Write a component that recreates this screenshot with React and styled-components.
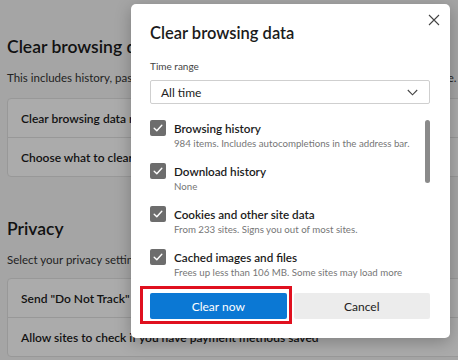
import React from "react";
import styled, { createGlobalStyle } from "styled-components";

const GlobalStyle = createGlobalStyle`
  html, body {
    margin: 0;
    padding: 0;
  }
  body {
    font-family: Lato, "Open Sans", sans-serif;
    color: #1b1b1b;
  }
`;

const Page = styled.div`
  position: relative;
  width: 458px;
  height: 360px;
  overflow: hidden;
  background: #f7f7f7;
  padding: 0 7px;
  box-sizing: border-box;
`;

const Section = styled.section`
  padding-top: ${(p) => p.top}px;
`;

const Heading = styled.h2`
  margin: 0;
  font-size: 17.5px;
  font-weight: 600;
  line-height: 22px;
  white-space: nowrap;
`;

const Lead = styled.p`
  margin: 13px 0 0;
  font-size: 11.5px;
  line-height: 14px;
  color: #333;
  white-space: nowrap;
`;

const Card = styled.div`
  margin-top: ${(p) => p.gap}px;
  width: 560px;
  background: #fff;
  border: 1px solid #e3e3e3;
  border-radius: 4px;
`;

const CardRow = styled.div`
  height: 38px;
  display: flex;
  align-items: center;
  padding-left: 13px;
  font-size: 12px;
  font-weight: 600;
  white-space: nowrap;
  & + & {
    border-top: 1px solid #e3e3e3;
  }
`;

const Overlay = styled.div`
  position: absolute;
  inset: 0;
  background: rgba(0, 0, 0, 0.33);
  padding: 4px 0 0 131px;
`;

const Dialog = styled.div`
  position: relative;
  width: 319px;
  height: 334px;
  box-sizing: border-box;
  background: #fff;
  border-radius: 5px;
  box-shadow: 0 4px 16px rgba(0, 0, 0, 0.25);
  padding: 17px 20px 0 19px;
  display: flex;
  flex-direction: column;
`;

const CloseButton = styled.button`
  position: absolute;
  top: 5px;
  right: 5px;
  width: 22px;
  height: 22px;
  padding: 0;
  border: none;
  background: none;
  display: flex;
  align-items: center;
  justify-content: center;
`;

const Title = styled.h1`
  margin: 0;
  font-size: 16.5px;
  font-weight: 600;
  line-height: 24px;
`;

const Label = styled.div`
  margin-top: 15px;
  font-size: 10px;
  line-height: 12px;
  color: #444;
`;

const Select = styled.div`
  margin-top: 8px;
  height: 24px;
  box-sizing: border-box;
  border: 1px solid #cfcfcf;
  border-radius: 2px;
  display: flex;
  align-items: center;
  justify-content: space-between;
  padding: 0 11px 0 10px;
  font-size: 12px;
  color: #222;
`;

const ListArea = styled.div`
  position: relative;
  margin-top: 16px;
  height: 160px;
  overflow: hidden;
`;

const Scrollbar = styled.div`
  position: absolute;
  right: 0;
  top: 0;
  width: 5px;
  height: 63px;
  border-radius: 3px;
  background: #8a8a8a;
`;

const Item = styled.div`
  display: flex;
  gap: 8px;
  height: 43px;
`;

const Box = styled.span`
  flex: none;
  width: 16px;
  height: 16px;
  border-radius: 2px;
  background: #6d6d6d;
  display: flex;
  align-items: center;
  justify-content: center;
`;

const ItemText = styled.div`
  display: flex;
  flex-direction: column;
  margin-top: 1px;
  max-width: 244px;
`;

const ItemTitle = styled.span`
  font-size: 11.7px;
  font-weight: 600;
  line-height: 15px;
  color: #1b1b1b;
`;

const ItemDesc = styled.span`
  font-size: 9.7px;
  line-height: 14px;
  color: #767676;
`;

const Actions = styled.div`
  margin-top: 13px;
  display: flex;
  gap: 7px;
  width: 280px;
`;

const ButtonWrap = styled.div`
  position: relative;
  flex: 1;
  display: flex;
`;

const Highlight = styled.span`
  position: absolute;
  left: -10px;
  right: -5px;
  top: -7px;
  bottom: -5px;
  border: 3px solid #e0101f;
  pointer-events: none;
`;

const Button = styled.button`
  flex: 1;
  height: 26px;
  border: none;
  border-radius: 2px;
  font-family: inherit;
  font-size: 12px;
  background: ${(p) => (p.$primary ? "#0b78d4" : "#ececec")};
  color: ${(p) => (p.$primary ? "#fff" : "#222")};
`;

const Check = () => (
  <svg width="12" height="12" viewBox="0 0 12 12">
    <path d="M2.2 6.3 L4.8 8.8 L9.8 3.2" fill="none" stroke="#fff" strokeWidth="1.4" strokeLinecap="round" strokeLinejoin="round" />
  </svg>
);

const items = [
  ["Browsing history", "984 items. Includes autocompletions in the address bar."],
  ["Download history", "None"],
  ["Cookies and other site data", "From 233 sites. Signs you out of most sites."],
  ["Cached images and files", "Frees up less than 106 MB. Some sites may load more slowly on your next visit."],
];

export default function App() {
  return (
    <>
      <GlobalStyle />
      <Page>
        <Section top={36}>
          <Heading>Clear browsing data</Heading>
          <Lead>
            This includes history, passwords, cookies, and more. Data will be deleted from this profile. Manage your data
          </Lead>
          <Card gap={13}>
            <CardRow>Clear browsing data now</CardRow>
            <CardRow>Choose what to clear every time you close the browser</CardRow>
          </Card>
        </Section>
        <Section top={41}>
          <Heading>Privacy</Heading>
          <Lead>Select your privacy settings for Microsoft Edge.</Lead>
          <Card gap={11}>
            <CardRow>Send "Do Not Track" requests</CardRow>
            <CardRow>Allow sites to check if you have payment methods saved</CardRow>
          </Card>
        </Section>
        <Overlay>
          <Dialog>
            <CloseButton aria-label="Close">
              <svg width="12" height="12" viewBox="0 0 12 12">
                <path d="M1 1 L11 11 M11 1 L1 11" stroke="#444" strokeWidth="1.1" />
              </svg>
            </CloseButton>
            <Title>Clear browsing data</Title>
            <Label>Time range</Label>
            <Select>
              <span>All time</span>
              <svg width="11" height="7" viewBox="0 0 11 7">
                <path d="M0.8 1 L5.5 5.8 L10.2 1" fill="none" stroke="#444" strokeWidth="1.1" />
              </svg>
            </Select>
            <ListArea>
              {items.map(([t, d]) => (
                <Item key={t}>
                  <Box>
                    <Check />
                  </Box>
                  <ItemText>
                    <ItemTitle>{t}</ItemTitle>
                    <ItemDesc>{d}</ItemDesc>
                  </ItemText>
                </Item>
              ))}
              <Scrollbar />
            </ListArea>
            <Actions>
              <ButtonWrap>
                <Button $primary>Clear now</Button>
                <Highlight />
              </ButtonWrap>
              <ButtonWrap>
                <Button>Cancel</Button>
              </ButtonWrap>
            </Actions>
          </Dialog>
        </Overlay>
      </Page>
    </>
  );
}
